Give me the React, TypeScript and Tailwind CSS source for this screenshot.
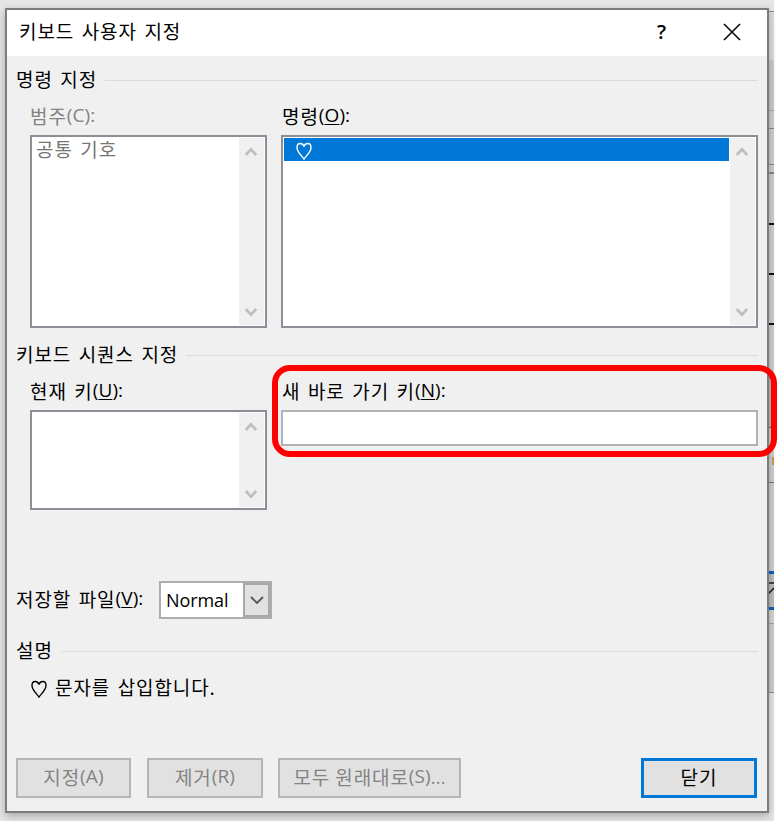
import type { ReactNode } from "react";

const Mnemonic = ({ letter, underline = false }: { letter: string; underline?: boolean }) => (
  <span className="font-['Open_Sans',sans-serif] text-[19px] tracking-[0.1px]">
    (<span className={underline ? "underline decoration-1 underline-offset-2" : ""}>{letter}</span>)
  </span>
);

const Colon = () => <span className="font-['Open_Sans',sans-serif] text-[19px]">:</span>;

const Heart = ({ className }: { className: string }) => (
  <svg viewBox="0 0 16 18" className={className} fill="none" stroke="currentColor" strokeWidth="1.4">
    <path d="M8 4.6C7 .4 1 .2 1 5.4C1 9.6 4.6 12.6 8 17C11.4 12.6 15 9.6 15 5.4C15 .2 9 .4 8 4.6Z" />
  </svg>
);

const Chevron = ({ up = false }: { up?: boolean }) => (
  <svg viewBox="0 0 12 9" className="h-[9px] w-3" fill="none" stroke="#bfbfbf" strokeWidth="2.8">
    <path d={up ? "M.8 8L6 2.4L11.2 8" : "M.8 1L6 6.6L11.2 1"} />
  </svg>
);

const SectionHeading = ({ children, className }: { children: ReactNode; className: string }) => (
  <div className={`flex items-center ${className}`}>
    <span className="pb-[3px]">{children}</span>
    <span className="h-px flex-1 bg-[#dcdcdc]" />
  </div>
);

const ListBox = ({ children, className }: { children?: ReactNode; className: string }) => (
  <div className={`flex border-2 border-[#8b8f98] bg-white ${className}`}>
    <div className="min-w-0 flex-1">{children}</div>
    {/* Scrollbar */}
    <div className="my-px mr-px flex w-[25px] flex-col items-center justify-between bg-[#f0f0f0] pt-[9px] pr-0.5 pb-2">
      <Chevron up />
      <Chevron />
    </div>
  </div>
);

const DisabledButton = ({ children, className }: { children: ReactNode; className: string }) => (
  <button
    disabled
    className={`flex h-10 items-center justify-center border-2 border-[#b5b5b5] bg-[#e1e1e1] pb-[3px] text-[#838383] ${className}`}
  >
    {children}
  </button>
);

/* Sliver of the parent window that shows to the right of the dialog */
const ParentWindow = () => (
  <div className="absolute top-[11px] right-[3px] h-[682px] w-[7px] overflow-hidden border-y border-[#8a8a8a] bg-[#d0d0d0]">
    <div className="h-12 bg-[#dedede]" />
    <div className="h-[51px] border-b border-[#aaaaaa] bg-[#cccccc]" />
    <div className="h-[18px] border-b border-[#858992]" />
    <div className="h-9 border-b border-[#858992]" />
    <div className="h-[9px] border-b-2 border-[#858992]" />
    <div className="h-[51px] border-b-2 border-[#111111]" />
    <div className="h-[50px] border-b-2 border-[#111111]" />
    <div className="h-[50px] border-b-2 border-[#111111]" />
    <div className="h-[53px] border-b border-[#666666]" />
    <div className="h-[50px] border-b border-[#666666] bg-[#bcbcbc]" />
    <div className="flex h-[55px] items-center justify-end border-b border-[#737982] pt-3">
      <span className="h-2 w-0.5 bg-[#d49a4e]" />
    </div>
    <div className="h-[88px]" />
    <div className="h-[39px] border-y-[3px] border-[#0067c5] bg-[#bebebe] pt-2">
      <svg viewBox="0 0 7 14" className="h-[14px] w-[7px]" fill="none" stroke="#222222" strokeWidth="1.6">
        <path d="M1 1H7M1 12L7 6" />
      </svg>
    </div>
    <div className="h-3.5 border-b border-[#aaaaaa] bg-[#d6d6d6]" />
  </div>
);

export default function App() {
  return (
    <div className="relative h-[821px] w-[777px] overflow-hidden bg-white font-['Noto_Sans_CJK_KR',sans-serif] text-[19px] leading-none tracking-[0.9px] text-black [word-spacing:2.4px]">
      <div className="h-full w-[774px] bg-[#e6e6e6]" />
      <ParentWindow />

      <div className="absolute top-2 left-[5px] flex h-[805px] w-[764px] flex-col border-2 border-[#7c7c7c] bg-[#f0f0f0] shadow-[0_3px_8px_rgba(0,0,0,0.28)]">
        {/* Title bar */}
        <div className="flex h-[46px] shrink-0 items-center bg-white pb-[3px] pl-3">
          <span className="flex-1 pb-0.5">키보드 사용자 지정</span>
          <span className="mr-[56px] font-['Open_Sans',sans-serif] text-[20px] font-semibold">?</span>
          <svg viewBox="0 0 18 18" className="mr-[26px] h-[18px] w-[18px]" stroke="#111111" strokeWidth="1.7">
            <path d="M1 1L17 17M17 1L1 17" />
          </svg>
        </div>

        <div className="flex flex-1 flex-col pr-[9px] pl-[9px]">
          <SectionHeading className="h-12 shrink-0 gap-2">명령 지정</SectionHeading>
          <div className="grid grid-cols-[237px_477px] gap-x-[14px] pl-3.5">
            <div>
              <div className="flex h-[31px] items-center pb-2 text-[#838383]">
                범주
                <Mnemonic letter="C" />
                <Colon />
              </div>
              <ListBox className="h-[193px]">
                <div className="px-1 pt-0.5 text-[#757575]">공통 기호</div>
              </ListBox>
            </div>
            <div>
              <div className="flex h-[31px] items-center pb-2 pl-px">
                명령
                <Mnemonic letter="O" underline />
                <Colon />
              </div>
              <ListBox className="h-[193px]">
                <div className="mt-px mr-px ml-px flex h-[23px] items-center bg-[#0078d7] pl-3 text-white">
                  <Heart className="mt-0.5 h-[18px] w-4" />
                </div>
              </ListBox>
            </div>
          </div>

          <SectionHeading className="h-[54px] shrink-0 gap-2">키보드 시퀀스 지정</SectionHeading>
          <div className="grid grid-cols-[237px_477px] gap-x-[14px] pl-3.5">
            <div>
              <div className="flex h-7 items-center pb-[11px]">
                <span>현재 키</span>
                <Mnemonic letter="U" underline />
                <Colon />
              </div>
              <ListBox className="h-[100px]" />
            </div>
            <div>
              <div className="flex h-7 items-center pb-[11px] pl-px">
                <span>새 바로 가기 키</span>
                <Mnemonic letter="N" underline />
                <Colon />
              </div>
              <div className="h-9 border-2 border-[#b1b2b8] bg-white" />
            </div>
          </div>

          <div className="mt-[71px] flex h-[38px] items-center">
            <div className="flex items-center pb-[3px]">
              <span>저장할 파일</span>
              <Mnemonic letter="V" underline />
              <Colon />
            </div>
            <div className="mr-[486px] ml-auto flex h-[38px] w-[113px] border-2 border-[#abadb3] bg-white">
              <span className="flex flex-1 items-center pb-px pl-[5px] font-['Open_Sans',sans-serif] text-[18px] tracking-[-0.1px]">
                Normal
              </span>
              <div className="flex w-[27px] items-center justify-center border-2 border-[#a9a9a9] bg-[#e1e1e1]">
                <svg viewBox="0 0 14 9" className="h-[9px] w-3.5 shrink-0" fill="none" stroke="#555555" strokeWidth="1.8">
                  <path d="M1 1L7 7L13 1" />
                </svg>
              </div>
            </div>
          </div>

          <SectionHeading className="mt-1 h-14 shrink-0 gap-2">설명</SectionHeading>
          <div className="flex h-[18px] items-center pl-[15px]">
            <Heart className="mt-0.5 mr-2 h-[18px] w-4" />
            <span className="pb-[3px]">문자를 삽입합니다.</span>
          </div>

          <div className="mt-[61px] flex">
            <DisabledButton className="mr-4 w-[115px]">
              지정
              <Mnemonic letter="A" />
            </DisabledButton>
            <DisabledButton className="mr-[15px] w-[116px]">
              제거
              <Mnemonic letter="R" />
            </DisabledButton>
            <DisabledButton className="w-[183px]">
              <span>모두 원래대로</span>
              <Mnemonic letter="S" />
              <span className="font-['Open_Sans',sans-serif] text-[18px] tracking-[0.2px]">...</span>
            </DisabledButton>
            <button className="mr-px ml-auto flex h-10 w-[116px] items-center justify-center border-[3px] border-[#0078d7] bg-[#e1e1e1] pb-[3px]">
              닫기
            </button>
          </div>
        </div>
      </div>

      {/* Callout around the new shortcut field */}
      <div className="absolute top-[365px] left-[272px] h-[92px] w-[505px] rounded-[18px] border-6 border-[#ff0000]" />
    </div>
  );
}
